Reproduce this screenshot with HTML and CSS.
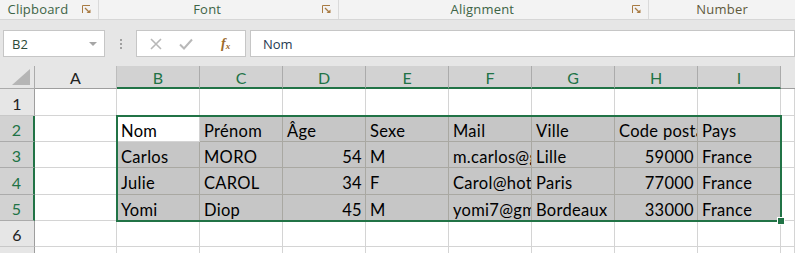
FILE: index.html
```html
<!DOCTYPE html>
<html lang="fr">
<head>
    <meta charset="UTF-8">
    <title>Classeur</title>
    <link rel="stylesheet" href="styles.css">
</head>
<body>
    <div class="ribbon">
        <div class="group group-clipboard">
            <span class="group-label">Clipboard</span>
            <svg class="launcher" width="9" height="9" viewBox="0 0 9 9"><path d="M0.5 8V0.5H8" fill="none" stroke="#a97b43"/><path d="M3 3L7 7" stroke="#a97b43" stroke-width="1.2"/><path d="M4.5 8H8.5V4.5Z" fill="#a97b43"/></svg>
        </div>
        <div class="group group-font">
            <span class="group-label">Font</span>
            <svg class="launcher" width="9" height="9" viewBox="0 0 9 9"><path d="M0.5 8V0.5H8" fill="none" stroke="#a97b43"/><path d="M3 3L7 7" stroke="#a97b43" stroke-width="1.2"/><path d="M4.5 8H8.5V4.5Z" fill="#a97b43"/></svg>
        </div>
        <div class="group group-align">
            <span class="group-label">Alignment</span>
            <svg class="launcher" width="9" height="9" viewBox="0 0 9 9"><path d="M0.5 8V0.5H8" fill="none" stroke="#a97b43"/><path d="M3 3L7 7" stroke="#a97b43" stroke-width="1.2"/><path d="M4.5 8H8.5V4.5Z" fill="#a97b43"/></svg>
        </div>
        <div class="group group-number">
            <span class="group-label">Number</span>
        </div>
    </div>

    <div class="formula-bar">
        <div class="name-box">
            <span>B2</span>
            <span class="caret"></span>
        </div>
        <div class="grip">
            <span></span><span></span><span></span>
        </div>
        <div class="fx-buttons">
            <svg width="12" height="12" viewBox="0 0 12 12"><path d="M1 1L11 11M11 1L1 11" stroke="#b8b8b8" stroke-width="1.6"/></svg>
            <svg width="14" height="12" viewBox="0 0 14 12"><path d="M1 6.5L5 10.5L13 1.5" fill="none" stroke="#b8b8b8" stroke-width="2"/></svg>
            <span class="fx">f<sub>x</sub></span>
        </div>
        <div class="formula-input">Nom</div>
    </div>

    <div class="sheet">
        <div class="hd corner"><svg width="18" height="16" viewBox="0 0 18 16"><polygon points="18,0 18,16 0,16" fill="#b5b5b5"/></svg></div>
        <div class="hd col">A</div>
        <div class="hd col sel">B</div>
        <div class="hd col sel">C</div>
        <div class="hd col sel">D</div>
        <div class="hd col sel">E</div>
        <div class="hd col sel">F</div>
        <div class="hd col sel">G</div>
        <div class="hd col sel">H</div>
        <div class="hd col sel">I</div>
        <div class="hd col rest"></div>

        <div class="hd row">1</div>
        <div class="c"></div><div class="c"></div><div class="c"></div><div class="c"></div><div class="c"></div>
        <div class="c"></div><div class="c"></div><div class="c"></div><div class="c"></div><div class="c"></div>

        <div class="hd row sel">2</div>
        <div class="c"></div>
        <div class="c active">Nom</div>
        <div class="c s">Prénom</div>
        <div class="c s">Âge</div>
        <div class="c s">Sexe</div>
        <div class="c s">Mail</div>
        <div class="c s">Ville</div>
        <div class="c s">Code postal</div>
        <div class="c s">Pays</div>
        <div class="c"></div>

        <div class="hd row sel">3</div>
        <div class="c"></div>
        <div class="c s">Carlos</div>
        <div class="c s">MORO</div>
        <div class="c s num">54</div>
        <div class="c s">M</div>
        <div class="c s">m.carlos@gmail.com</div>
        <div class="c s">Lille</div>
        <div class="c s num">59000</div>
        <div class="c s">France</div>
        <div class="c"></div>

        <div class="hd row sel">4</div>
        <div class="c"></div>
        <div class="c s">Julie</div>
        <div class="c s">CAROL</div>
        <div class="c s num">34</div>
        <div class="c s">F</div>
        <div class="c s">Carol@hotmail.fr</div>
        <div class="c s">Paris</div>
        <div class="c s num">77000</div>
        <div class="c s">France</div>
        <div class="c"></div>

        <div class="hd row sel">5</div>
        <div class="c"></div>
        <div class="c s">Yomi</div>
        <div class="c s">Diop</div>
        <div class="c s num">45</div>
        <div class="c s">M</div>
        <div class="c s">yomi7@gmail.com</div>
        <div class="c s">Bordeaux</div>
        <div class="c s num">33000</div>
        <div class="c s">France</div>
        <div class="c"></div>

        <div class="hd row">6</div>
        <div class="c"></div><div class="c"></div><div class="c"></div><div class="c"></div><div class="c"></div>
        <div class="c"></div><div class="c"></div><div class="c"></div><div class="c"></div><div class="c"></div>

        <div class="hd row">7</div>
        <div class="c"></div><div class="c"></div><div class="c"></div><div class="c"></div><div class="c"></div>
        <div class="c"></div><div class="c"></div><div class="c"></div><div class="c"></div><div class="c"></div>

        <div class="selection"><span class="handle"></span></div>
    </div>
</body>
</html>
```

FILE: styles.css
```css
body {
    margin: 0;
    width: 795px;
    height: 253px;
    overflow: hidden;
    background-color: #e6e6e6;
    font-family: Lato, "Noto Sans", sans-serif;
}

/* ribbon group captions */
.ribbon {
    display: flex;
    height: 20px;
    background-color: #f3f3f3;
    border-bottom: 1px solid #d6d6d6;
    box-sizing: border-box;
}
.group {
    position: relative;
    display: flex;
    align-items: center;
    height: 19px;
    box-sizing: border-box;
    border-right: 1px solid #dadada;
    font-family: "Open Sans", sans-serif;
    font-size: 13px;
    letter-spacing: 0.2px;
    color: #3d6446;
}
.group-label {
    flex: 1;
    text-align: center;
    padding-bottom: 1px;
}
.group-clipboard { width: 101px; padding-right: 22px; }
.group-font { width: 246px; padding-right: 22px; }
.group-align { width: 319px; padding-right: 22px; }
.group-number { width: 150px; border-right: none; color: #5f5a3c; }
.launcher {
    position: absolute;
    right: 7px;
    top: 5px;
}

/* formula bar */
.formula-bar {
    display: flex;
    align-items: stretch;
    height: 27px;
    margin-top: 10px;
    padding-left: 3px;
}
.name-box,
.fx-buttons,
.formula-input {
    background-color: #fff;
    border: 1px solid #c6c6c6;
    box-sizing: border-box;
}
.name-box {
    width: 102px;
    display: flex;
    align-items: center;
    justify-content: space-between;
    padding: 0 7px 0 8px;
    font-family: "Open Sans", sans-serif;
    font-size: 13px;
    color: #2b4a36;
}
.caret {
    width: 0;
    height: 0;
    border-left: 4px solid transparent;
    border-right: 4px solid transparent;
    border-top: 4px solid #a6a6a6;
}
.grip {
    width: 31px;
    display: flex;
    flex-direction: column;
    align-items: center;
    justify-content: center;
    gap: 2px;
}
.grip span {
    width: 2px;
    height: 2px;
    background-color: #a0a0a0;
}
.fx-buttons {
    width: 110px;
    display: flex;
    align-items: center;
    gap: 17px;
    padding-left: 13px;
}
.fx {
    margin-left: 11px;
    font-family: "Liberation Serif", serif;
    font-style: italic;
    font-weight: bold;
    font-size: 14px;
    color: #9b6a2c;
}
.fx sub {
    font-size: 9px;
    vertical-align: -1px;
}
.formula-input {
    flex: 1;
    margin-left: 4px;
    padding-left: 12px;
    display: flex;
    align-items: center;
    font-family: "Open Sans", sans-serif;
    font-size: 13px;
    color: #263a52;
}

/* worksheet */
.sheet {
    position: relative;
    display: grid;
    grid-template-columns: 35px 82px repeat(8, 83px) 1fr;
    grid-template-rows: 23px 27px 26px 26px 27px 26px 26px 26px;
    margin-top: 9px;
    background-color: #fff;
}
.hd {
    background-color: #e6e6e6;
    display: flex;
    align-items: center;
    justify-content: center;
    font-size: 16px;
    color: #222;
    box-sizing: border-box;
}
.corner {
    justify-content: flex-end;
    align-items: flex-end;
    padding: 0 4px 3px 0;
    border-right: 1px solid #ababab;
    border-bottom: 1px solid #ababab;
}
.col {
    border-right: 1px solid #bdbdbd;
    border-bottom: 1px solid #9e9e9e;
    padding-top: 1px;
}
.col.sel {
    background-color: #d2d2d2;
    color: #217346;
    border-right-color: #ababab;
    border-bottom: 2px solid #217346;
}
.col.rest {
    border-right: none;
}
.row {
    border-right: 1px solid #9e9e9e;
    border-bottom: 1px solid #c8c8c8;
    padding-top: 2px;
}
.row.sel {
    background-color: #d2d2d2;
    color: #217346;
    border-right: 2px solid #217346;
    border-bottom-color: #ababab;
}
.c {
    border-right: 1px solid #d4d4d4;
    border-bottom: 1px solid #d4d4d4;
    box-sizing: border-box;
    padding: 5px 3px 0 4px;
    font-size: 16.5px;
    letter-spacing: 0.3px;
    color: #000;
    white-space: nowrap;
    overflow: hidden;
}
.c.s {
    background-color: #c6c6c6;
    border-right-color: #a9a8a2;
    border-bottom-color: #a9a8a2;
}
.c.active {
    background-color: #fff;
}
.c.num {
    text-align: right;
}

/* selection outline drawn over the B2:I5 range */
.selection {
    position: absolute;
    grid-column: 3 / 11;
    grid-row: 3 / 7;
    top: -1px;
    left: -1px;
    right: -1px;
    bottom: -1px;
    border: 2px solid #217346;
    pointer-events: none;
}
.handle {
    position: absolute;
    right: -5px;
    bottom: -5px;
    width: 6px;
    height: 6px;
    background-color: #217346;
    border: 1px solid #fff;
}
```
